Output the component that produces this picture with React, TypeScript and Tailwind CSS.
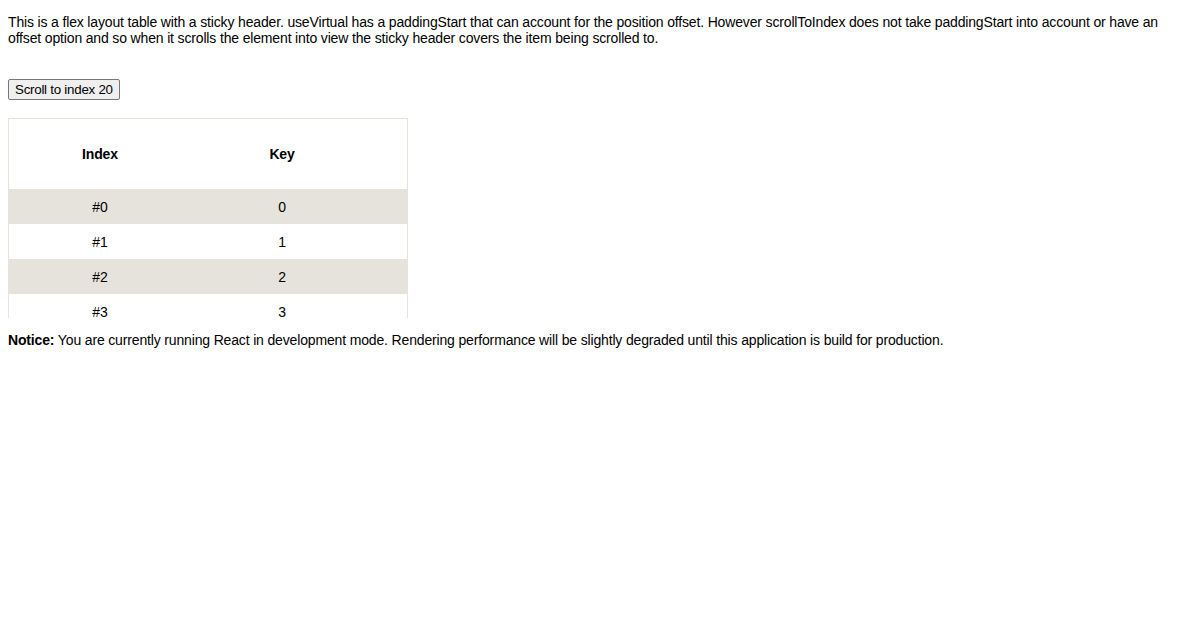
import React from "react";

export default function App() {
  const rows = [0, 1, 2, 3];
  return (
    <div className="bg-white min-h-[630px] px-2 pt-[14px] text-[14px] leading-[16px] text-black tracking-[-0.155px]" style={{ fontFamily: '"Liberation Sans", Arial, sans-serif' }}>
      <p className="m-0">
        This is a flex layout table with a sticky header. useVirtual has a paddingStart that can account for the position offset. However scrollToIndex does not take paddingStart into account or have an offset option and so when it scrolls the element into view the sticky header covers the item being scrolled to.
      </p>
      <div className="mt-[34px] h-[21px]">
        <button className="h-[21px] -translate-y-[1px] text-[13.33px] leading-[15px] px-[6px] py-0 border border-[#767676] bg-[#efefef] rounded-[2px] text-black tracking-[-0.25px]">
          Scroll to index 20
        </button>
      </div>
      <div className="mt-[17px] w-[400px] h-[200px] overflow-hidden border-t border-l border-r border-[#e6e3dd]">
        <div className="flex h-[70px] items-center font-bold">
          <div className="w-[182px] text-center">Index</div>
          <div className="w-[182px] text-center">Key</div>
        </div>
        {rows.map((r) => (
          <div key={r} className={`flex h-[35px] items-center ${r % 2 === 0 ? "bg-[#e6e3dd]" : "bg-white"}`}>
            <div className="w-[182px] text-center">#{r}</div>
            <div className="w-[182px] text-center">{r}</div>
          </div>
        ))}
      </div>
      <p className="m-0 mt-[14px]">
        <b>Notice:</b> You are currently running React in development mode. Rendering performance will be slightly degraded until this application is build for production.
      </p>
    </div>
  );
}
